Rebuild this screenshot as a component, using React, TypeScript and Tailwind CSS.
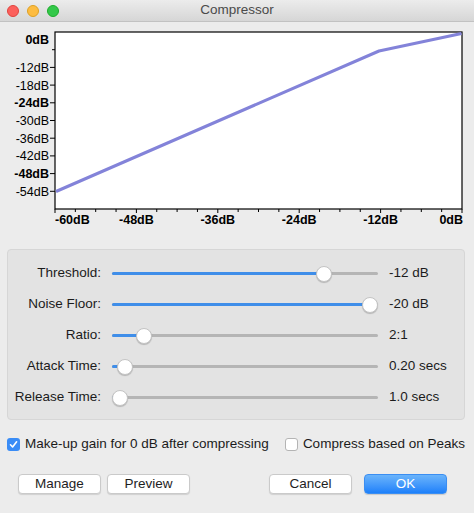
import React from 'react';

const FONT = { fontFamily: '"Liberation Sans", Arial, sans-serif' };

// y-axis labels of the response graph (label, y of tick, bold)
const Y_LABELS: { text: string; y: number; bold: boolean; ty?: number }[] = [
  { text: '0dB', y: 32, bold: true, ty: 39 },
  { text: '-12dB', y: 67.4, bold: false },
  { text: '-18dB', y: 85.1, bold: false },
  { text: '-24dB', y: 102.8, bold: true },
  { text: '-30dB', y: 120.5, bold: false },
  { text: '-36dB', y: 138.2, bold: false },
  { text: '-42dB', y: 155.9, bold: false },
  { text: '-48dB', y: 173.6, bold: true },
  { text: '-54dB', y: 191.3, bold: false },
];

const X_LABELS = ['-60dB', '-48dB', '-36dB', '-24dB', '-12dB', '0dB'];

const PX0 = 55;
const PX1 = 462;
const PY0 = 32;
const PY1 = 209;

const Graph = () => {
  const w = PX1 - PX0;
  const xTicks = Array.from({ length: 21 }, (_, i) => PX0 + (w * i) / 20);
  return (
    <svg width={474} height={227} viewBox="0 22 474 227" className="block" style={FONT}>
      <rect x={PX0} y={PY0} width={w} height={PY1 - PY0} fill="#fff" stroke="#000" strokeWidth={1.2} />
      {/* y ticks */}
      {Y_LABELS.map((l) => (
        <g key={l.text}>
          {l.y > PY0 && <line x1={50} x2={PX0} y1={l.y} y2={l.y} stroke="#000" strokeWidth={1} />}
          <text
            x={49}
            y={(l.ty ?? l.y) + 4.5}
            textAnchor="end"
            fontSize={12.5}
            fontWeight={l.bold ? 700 : 400}
            fill="#000"
          >
            {l.text}
          </text>
        </g>
      ))}
      <line x1={52} x2={PX0} y1={49.7} y2={49.7} stroke="#000" strokeWidth={1} />
      {/* x ticks */}
      {xTicks.map((x, i) => (
        <line key={i} x1={x} x2={x} y1={PY1} y2={PY1 + (i % 4 === 0 ? 4 : 3)} stroke="#000" strokeWidth={1} />
      ))}
      {X_LABELS.map((t, i) => {
        const x = PX0 + (w * i) / 5;
        const anchor = i === 0 ? 'start' : i === 5 ? 'end' : 'middle';
        return (
          <text key={t} x={i === 5 ? PX1 + 1 : x} y={224} textAnchor={anchor} fontSize={12.5} fontWeight={700} fill="#000">
            {t}
          </text>
        );
      })}
      <polyline points="56,191.5 379,51 461.5,33.5" fill="none" stroke="#8383d9" strokeWidth={3} strokeLinejoin="round" />
    </svg>
  );
};

const SLIDERS = [
  { label: 'Threshold:', value: '-12 dB', pos: 211.7 },
  { label: 'Noise Floor:', value: '-20 dB', pos: 258 },
  { label: 'Ratio:', value: '2:1', pos: 32 },
  { label: 'Attack Time:', value: '0.20 secs', pos: 13 },
  { label: 'Release Time:', value: '1.0 secs', pos: 8 },
];

const Slider = ({ pos }: { pos: number }) => (
  <div className="relative h-[16px] w-[266px] flex items-center">
    <div className="h-[3px] w-full rounded-full bg-[#b5b5b5]" />
    <div className="absolute left-0 h-[3px] rounded-full bg-[#3f8ee9]" style={{ width: pos }} />
    <div
      className="absolute top-0 h-[16px] w-[16px] rounded-full bg-white border border-[#c4c4c4] shadow-[0_1px_1px_rgba(0,0,0,0.2)]"
      style={{ left: pos - 8 }}
    />
  </div>
);

const Button = ({ children, primary }: { children: React.ReactNode; primary?: boolean }) => (
  <button
    className={
      primary
        ? 'h-[20px] w-[83px] rounded-[4px] bg-gradient-to-b from-[#6ab4fb] to-[#1c80fa] border border-[#3b8ef2] text-white text-[13.5px] leading-none shadow-[0_1px_1px_rgba(0,0,0,0.15)]'
        : 'h-[20px] w-[83px] rounded-[4px] bg-white border border-[#cacaca] text-[#1e1e1e] text-[13.5px] leading-none shadow-[0_1px_1px_rgba(0,0,0,0.12)]'
    }
    style={FONT}
  >
    {children}
  </button>
);

export default function App() {
  return (
    <div className="w-[474px] h-[513px] bg-[#ececec] overflow-hidden" style={FONT}>
      {/* title bar */}
      <div className="relative h-[22px] bg-gradient-to-b from-[#ececec] to-[#d6d6d6] border-b border-[#c2c2c2] flex items-center justify-center">
        <div className="absolute left-[7px] top-[5px] flex gap-[8px]">
          <span className="h-[12px] w-[12px] rounded-full bg-[#fc605c] border border-[#e0443e]" />
          <span className="h-[12px] w-[12px] rounded-full bg-[#fdbc40] border border-[#dea123]" />
          <span className="h-[12px] w-[12px] rounded-full bg-[#34c84a] border border-[#1dad2b]" />
        </div>
        <span className="text-[13.5px] text-[#4a4a4a]">Compressor</span>
      </div>

      <Graph />

      {/* controls group */}
      <div className="mx-[7px] w-[458px] rounded-[4px] border border-[#d6d6d6] bg-[#e3e3e3] pt-[8px] pb-[6px]">
        {SLIDERS.map((s) => (
          <div key={s.label} className="h-[31px] flex items-center text-[13.5px] text-[#1b1b1b]">
            <div className="w-[93px] text-right whitespace-nowrap">{s.label}</div>
            <div className="ml-[11px]">
              <Slider pos={s.pos} />
            </div>
            <div className="ml-[11px]">{s.value}</div>
          </div>
        ))}
      </div>

      {/* checkboxes */}
      <div className="mt-[14px] h-[20px] flex items-center text-[13.5px] text-[#1b1b1b] whitespace-nowrap">
        <span className="ml-[7px] h-[13px] w-[13px] shrink-0 rounded-[3px] bg-[#3a8cf6] flex items-center justify-center">
          <svg width="9" height="9" viewBox="0 0 9 9">
            <path d="M1.5 4.8 L3.6 7 L7.6 1.8" fill="none" stroke="#fff" strokeWidth="1.6" strokeLinecap="round" strokeLinejoin="round" />
          </svg>
        </span>
        <span className="ml-[5px]">Make-up gain for 0 dB after compressing</span>
        <span className="ml-[16px] h-[13px] w-[13px] shrink-0 rounded-[3px] bg-white border border-[#b4b4b4]" />
        <span className="ml-[5px]">Compress based on Peaks</span>
      </div>

      {/* buttons */}
      <div className="mt-[20px] flex items-center justify-between pl-[18px] pr-[27px]">
        <div className="flex gap-[6px]">
          <Button>Manage</Button>
          <Button>Preview</Button>
        </div>
        <div className="flex gap-[12px]">
          <Button>Cancel</Button>
          <Button primary>OK</Button>
        </div>
      </div>
    </div>
  );
}
